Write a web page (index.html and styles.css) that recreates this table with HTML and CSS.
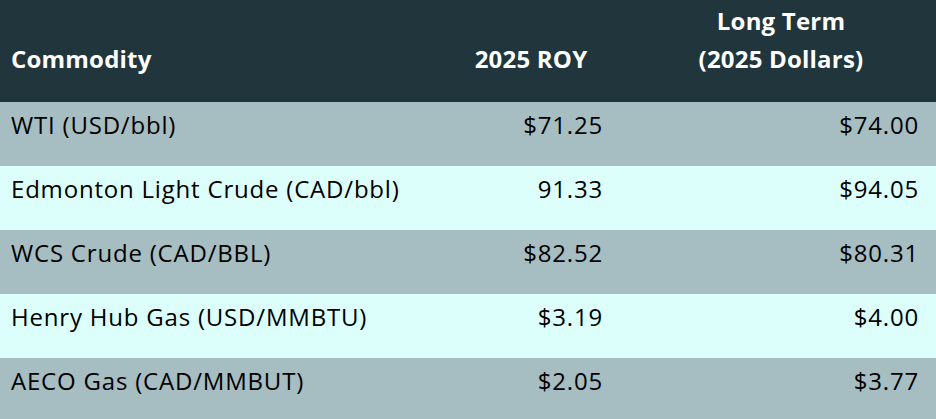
FILE: index.html
```html
<!DOCTYPE html>
<html>
<head>
<meta charset="utf-8">
<link rel="stylesheet" href="styles.css">
</head>
<body>
<div class="table">
  <div class="row head">
    <div class="cell c1">Commodity</div>
    <div class="cell c2">2025 ROY</div>
    <div class="cell c3">Long Term<br>(2025 Dollars)</div>
  </div>
  <div class="row dark">
    <div class="cell c1">WTI (USD/bbl)</div>
    <div class="cell c2">$71.25</div>
    <div class="cell c3">$74.00</div>
  </div>
  <div class="row light">
    <div class="cell c1">Edmonton Light Crude (CAD/bbl)</div>
    <div class="cell c2">91.33</div>
    <div class="cell c3">$94.05</div>
  </div>
  <div class="row dark">
    <div class="cell c1">WCS Crude (CAD/BBL)</div>
    <div class="cell c2">$82.52</div>
    <div class="cell c3">$80.31</div>
  </div>
  <div class="row light">
    <div class="cell c1">Henry Hub Gas (USD/MMBTU)</div>
    <div class="cell c2">$3.19</div>
    <div class="cell c3">$4.00</div>
  </div>
  <div class="row dark">
    <div class="cell c1">AECO Gas (CAD/MMBUT)</div>
    <div class="cell c2">$2.05</div>
    <div class="cell c3">$3.77</div>
  </div>
</div>
</body>
</html>
```

FILE: styles.css
```css
html, body {
  margin: 0;
  padding: 0;
  background: #a6bdc2;
}
.table {
  width: 936px;
  font-family: "Open Sans", Lato, sans-serif;
  font-size: 24px;
  letter-spacing: 0.8px;
  color: #000;
}
.row {
  display: grid;
  grid-template-columns: 448px 166px 1fr;
  height: 64px;
}
.cell {
  padding-top: 8px;
  line-height: 30px;
  white-space: nowrap;
}
.c1 { padding-left: 11px; }
.c2 { text-align: right; padding-right: 11px; }
.c3 { text-align: right; padding-right: 17px; }
.row.head {
  height: 102px;
  background: #20363c;
  color: #fff;
  font-weight: bold;
  letter-spacing: 0.2px;
  align-items: end;
}
.row.head .cell {
  padding-top: 0;
  padding-bottom: 24px;
  line-height: 38px;
}
.row.head .c2 {
  text-align: center;
  padding-right: 0;
}
.row.head .c3 {
  text-align: center;
  padding-right: 0;
  padding-left: 12px;
}
.row.dark { background: #a6bdc2; }
.row.light { background: #dcfffc; }
```
